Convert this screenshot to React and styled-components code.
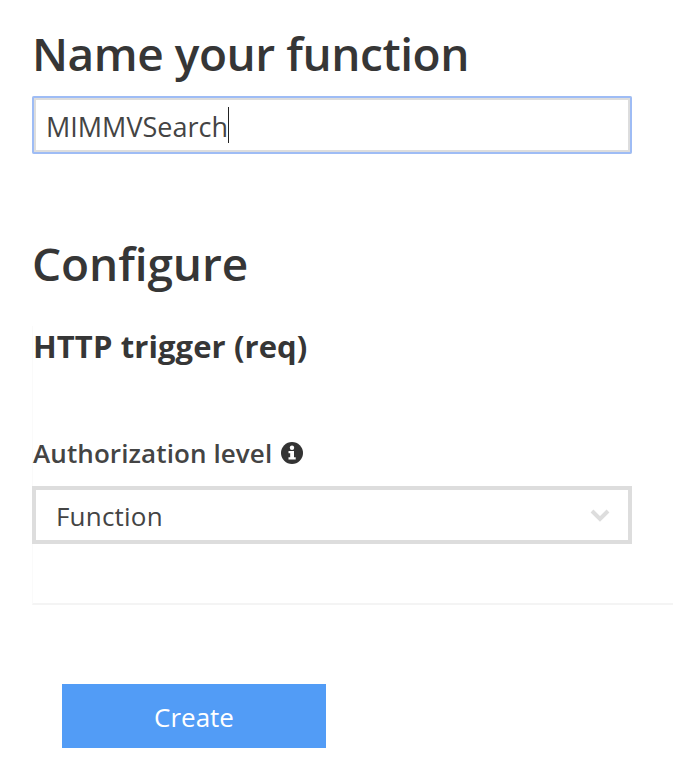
import styled, { createGlobalStyle } from 'styled-components';

const GlobalStyle = createGlobalStyle`
    html, body {
        margin:0;
        padding:0;
        background:#fff;
        overflow:hidden;
    }
    body {
        font-family:"Open Sans", "Noto Sans", "Liberation Sans", sans-serif;
        color:#333;
    }
`;

const Page = styled.div`
    width:673px;
    height:784px;
    overflow:hidden;
    padding:23px 0 0 32px;
    box-sizing:border-box;
`;

const Title = styled.h2`
    margin:0;
    height:60px;
    font-size:46px;
    line-height:60px;
    font-weight:600;
    letter-spacing:${props=>props.$tight ? '-0.45px' : '-0.1px'};
    color:#363636;
`;

const NameBox = styled.div`
    width:600px;
    height:58px;
    margin-top:13px;
    box-sizing:border-box;
    border:4px solid #ddd;
    outline:2px solid #9ebcf5;
    outline-offset:-2px;
    border-radius:2px;
    display:flex;
    align-items:center;
    padding:2px 0 0 10px;
    font-size:27px;
    color:#444;
`;

const Caret = styled.span`
    width:1px;
    height:36px;
    margin-top:-2px;
    background:#222;
`;

const ConfigTitle = styled(Title)`
    margin-top:79px;
`;

const Panel = styled.div`
    margin-top:33px;
    height:279px;
    box-sizing:border-box;
    border-left:1px solid #fafafa;
    border-bottom:2px solid #f4f4f4;
    display:flex;
    flex-direction:column;
`;

const TriggerName = styled.div`
    height:40px;
    font-size:31px;
    line-height:40px;
    font-weight:700;
    letter-spacing:0.1px;
    color:#363636;
`;

const LevelLabel = styled.label`
    margin-top:68px;
    height:38px;
    display:flex;
    align-items:center;
    gap:9px;
    font-size:26px;
    font-weight:600;
    letter-spacing:0.1px;
    color:#444;
`;

const SelectBox = styled.div`
    width:600px;
    height:58px;
    margin-top:14px;
    margin-left:-1px;
    box-sizing:border-box;
    border:4px solid #ddd;
    display:flex;
    align-items:center;
    justify-content:space-between;
    padding:0 18px 0 20px;
    font-size:26px;
    letter-spacing:0.2px;
    color:#444;
`;

const SelectValue = styled.span`
    padding-top:2px;
`;

const CreateButton = styled.button`
    display:block;
    width:264px;
    height:64px;
    margin:79px 0 0 30px;
    padding:2px 0 0;
    border:0;
    background:#529cf6;
    color:#fff;
    font-family:inherit;
    font-size:26px;
`;

function InfoIcon(){
    return(
        <svg width="22" height="22" viewBox="0 0 22 22">
            <circle cx="11" cy="11" r="11" fill="#333"/>
            <circle cx="11" cy="5.800" r="2.200" fill="#fff"/>
            <path d="M7.500 9h5.500v6.200h1.700v2.300H7.500v-2.300h1.700v-3.900H7.500z" fill="#fff"/>
        </svg>
    );
}

function Chevron(){
    return(
        <svg width="20" height="14" viewBox="0 0 20 14">
            <path d="M2 3l8 8 8-8" fill="none" stroke="#ddd" strokeWidth="4"/>
        </svg>
    );
}

export default function App(){
    return(
        <Page>
            <GlobalStyle/>
            <Title $tight>Name your function</Title>
            <NameBox>MIMMVSearch<Caret/></NameBox>
            <ConfigTitle>Configure</ConfigTitle>
            <Panel>
                <TriggerName>HTTP trigger (req)</TriggerName>
                <LevelLabel>Authorization level <InfoIcon/></LevelLabel>
                <SelectBox><SelectValue>Function</SelectValue><Chevron/></SelectBox>
            </Panel>
            <CreateButton>Create</CreateButton>
        </Page>
    );
}
